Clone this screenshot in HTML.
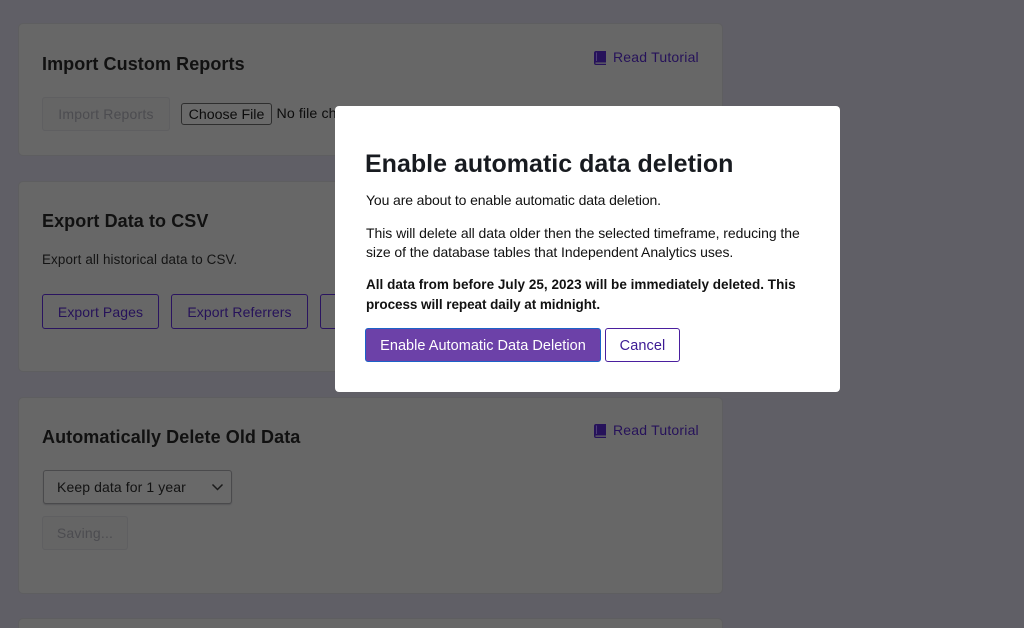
<!DOCTYPE html>
<html>
<head>
<meta charset="utf-8">
<style>
html,body{margin:0;padding:0;width:1024px;height:628px;overflow:hidden;background:#605f66;font-family:"Liberation Sans",sans-serif}
#page{position:absolute;left:0;top:0;width:1024px;height:628px;overflow:hidden;background:#605f66}
.card{position:absolute;left:18px;width:703px;background:#676767;border:1px solid #5e5e60;border-radius:5px}
.t{position:absolute;white-space:nowrap;line-height:20px}
.h{font-size:18px;font-weight:bold;color:#111;line-height:24px;letter-spacing:.08px}
.btn{position:absolute;box-sizing:border-box;height:35px;border:1.5px solid #2a1460;border-radius:3px;color:#26125a;font-size:14px;line-height:34px;text-align:center;white-space:nowrap;letter-spacing:.1px}
.dis{border:1px solid #5f5f61;color:#4c4c50;background:#656565;letter-spacing:.2px;line-height:32px}
.link{color:#26125a;font-size:14px;letter-spacing:.2px}
svg{position:absolute}
#modal{position:absolute;left:335px;top:106px;width:505px;height:286px;background:#fff;border-radius:4px}
#modal .p{position:absolute;left:31px;white-space:nowrap;font-size:14px;line-height:20px;color:#111;letter-spacing:-.08px}
#modal .b{font-size:13.5px;font-weight:bold}
</style>
</head>
<body>
<div id="page">
<div class="card" style="top:23px;height:131px"></div>
<div class="card" style="top:181px;height:189px"></div>
<div class="card" style="top:397px;height:195px"></div>
<div class="card" style="top:618px;height:10px;border-bottom:0;border-radius:5px 5px 0 0"></div>

<div class="t h" style="left:42px;top:52px">Import Custom Reports</div>
<svg style="left:593px;top:50px" width="14" height="15" viewBox="0 0 14 15"><path fill="#26125a" d="M3 1h10v11.500H3.200C2.600 12.500 2.300 12.800 2.300 13.100s.3.600.9.600H13V15H3C1.700 15 1 14.200 1 13V3c0-1.200.8-2 2-2z"/><path d="M3.500 2.500v8.500" stroke="#5a4a80" stroke-width=".8"/></svg>
<div class="t link" style="left:613px;top:47px">Read Tutorial</div>
<div class="btn dis" style="left:42px;top:97px;width:128px;height:34px">Import Reports</div>
<div style="position:absolute;box-sizing:border-box;left:181px;top:103px;width:91px;height:22px;background:#6a6a6a;border:1px solid #2e2e2e;border-radius:3px;color:#0c0c0c;font-size:14.200px;line-height:22px;text-align:center">Choose File</div>
<div class="t" style="left:276.500px;top:104px;font-size:14.200px;color:#0c0c0c;letter-spacing:.1px">No file chosen</div>

<div class="t h" style="left:42px;top:209px">Export Data to CSV</div>
<div class="t" style="left:42px;top:250px;font-size:13.400px;color:#141414;letter-spacing:.13px">Export all historical data to CSV.</div>
<div class="btn" style="left:42px;top:294px;width:117px">Export Pages</div>
<div class="btn" style="left:171px;top:294px;width:137px">Export Referrers</div>
<div class="btn" style="left:320px;top:294px;width:100px"></div>

<div class="t h" style="left:42px;top:425px">Automatically Delete Old Data</div>
<svg style="left:593px;top:423px" width="14" height="15" viewBox="0 0 14 15"><path fill="#26125a" d="M3 1h10v11.500H3.200C2.600 12.500 2.300 12.800 2.300 13.100s.3.600.9.600H13V15H3C1.700 15 1 14.200 1 13V3c0-1.200.8-2 2-2z"/><path d="M3.500 2.500v8.500" stroke="#5a4a80" stroke-width=".8"/></svg>
<div class="t link" style="left:613px;top:420px">Read Tutorial</div>
<div style="position:absolute;box-sizing:border-box;left:43px;top:470px;width:189px;height:34px;background:#696969;border:1px solid #4a4a4c;border-radius:3px;box-shadow:0 1px 1px #58585a"></div>
<div class="t" style="left:57px;top:477px;font-size:14px;color:#121212;letter-spacing:.1px">Keep data for 1 year</div>
<svg style="left:211px;top:483px" width="13" height="9" viewBox="0 0 13 9"><path d="M1.500 1.500L6.500 6.500L11.500 1.500" fill="none" stroke="#1a1a1a" stroke-width="1.500"/></svg>
<div class="btn dis" style="left:42px;top:516px;width:86px;height:34px">Saving...</div>

<div id="modal">
<div style="position:absolute;left:30px;top:41px;font-size:25px;line-height:34px;font-weight:bold;color:#181b20;white-space:nowrap;letter-spacing:.01px">Enable automatic data deletion</div>
<div class="p" style="top:84px;letter-spacing:-.12px">You are about to enable automatic data deletion.</div>
<div class="p" style="top:117px;letter-spacing:-.05px">This will delete all data older then the selected timeframe, reducing the</div>
<div class="p" style="top:136px">size of the database tables that Independent Analytics uses.</div>
<div class="p b" style="top:169px;letter-spacing:.03px">All data from before July 25, 2023 will be immediately deleted. This</div>
<div class="p b" style="top:189px;letter-spacing:-.06px">process will repeat daily at midnight.</div>
<div style="position:absolute;box-sizing:border-box;left:30px;top:222px;width:236px;height:34px;background:#6c41a8;border:1.500px solid #1c62c8;border-radius:3px;color:#fff;font-size:14.500px;line-height:33px;padding-top:1px;text-align:center;white-space:nowrap;letter-spacing:.03px">Enable Automatic Data Deletion</div>
<div style="position:absolute;box-sizing:border-box;left:270px;top:222px;width:75px;height:34px;background:#fff;border:1px solid #4a1f9e;border-radius:3px;color:#3c1a94;font-size:14.500px;line-height:33px;padding-top:1px;text-align:center;letter-spacing:.1px">Cancel</div>
</div>
</div>
</body>
</html>
